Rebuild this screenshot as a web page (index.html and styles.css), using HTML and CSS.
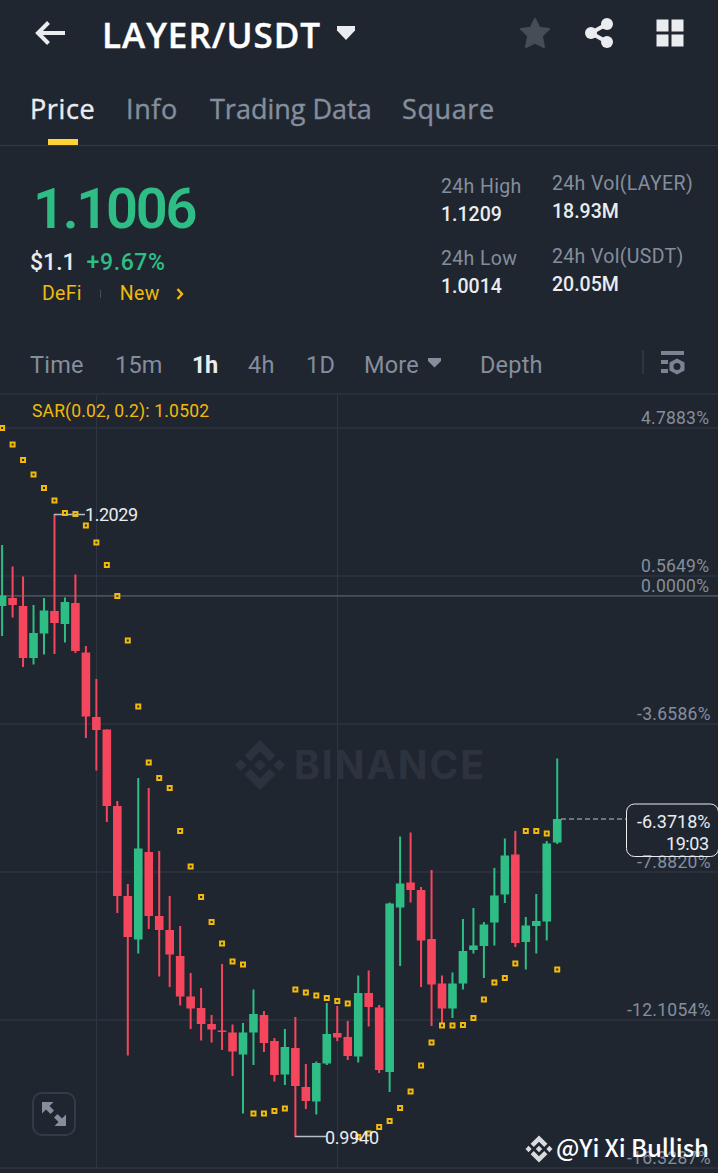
FILE: index.html
```html
<!DOCTYPE html>
<html lang="en">
<head>
  <meta charset="UTF-8">
  <title>LAYER/USDT</title>
  <link rel="stylesheet" href="styles.css">
</head>
<body>

  <!-- Top bar -->
  <header class="topbar">
    <svg class="back" width="32" height="26" viewBox="0 0 32 26">
      <path d="M31 13H4M14.500 2.500L4 13l10.500 10.500" fill="none" stroke="#eaecef" stroke-width="4"/>
    </svg>
    <h1 class="pair">LAYER/USDT</h1>
    <svg class="pair-caret" width="18" height="14" viewBox="0 0 18 14">
      <path d="M0 0h18v4.500L9 14 0 4.500z" fill="#eaecef"/>
    </svg>
    <div class="actions">
      <svg width="30" height="30" viewBox="0 0 30 30">
        <path d="M15 1l4.200 8.800 9.800 1.200-7.200 6.900 2.200 11.100-9-4.500-9 4.500 2.200-11.100L1 11l9.800-1.200z" fill="#474d57" stroke="#474d57" stroke-width="2" stroke-linejoin="round"/>
      </svg>
      <svg width="30" height="30" viewBox="0 0 30 30">
        <path d="M22 6L6 15l16 9" fill="none" stroke="#eaecef" stroke-width="4"/>
        <circle cx="6" cy="15" r="6" fill="#eaecef"/>
        <circle cx="22" cy="6" r="6" fill="#eaecef"/>
        <circle cx="22" cy="24" r="6" fill="#eaecef"/>
      </svg>
      <svg width="28" height="28" viewBox="0 0 28 28" fill="#eaecef">
        <rect x="0.500" y="0.500" width="12" height="12"/>
        <rect x="15.500" y="0.500" width="12" height="12"/>
        <rect x="0.500" y="15.500" width="12" height="12"/>
        <rect x="15.500" y="15.500" width="12" height="12"/>
      </svg>
    </div>
  </header>

  <!-- Tabs -->
  <nav class="tabs">
    <a class="tab active">Price</a>
    <a class="tab">Info</a>
    <a class="tab long">Trading Data</a>
    <a class="tab">Square</a>
  </nav>

  <!-- Price and 24h figures -->
  <section class="ticker">
    <div class="quote">
      <div class="price">1.1006</div>
      <div class="fiat"><span>$1.1</span><span class="change">+9.67%</span></div>
      <div class="tags">
        <span>DeFi</span>
        <i class="tag-line"></i>
        <span class="tag-new">New</span>
        <svg width="8" height="12" viewBox="0 0 8 12">
          <path d="M1.500 1L6 6l-4.500 5" fill="none" stroke="#f0b90b" stroke-width="2.400"/>
        </svg>
      </div>
    </div>
    <div class="stats">
      <div class="stat"><label>24h High</label><b>1.1209</b></div>
      <div class="stat"><label>24h Low</label><b>1.0014</b></div>
    </div>
    <div class="stats vol">
      <div class="stat"><label>24h Vol(LAYER)</label><b>18.93M</b></div>
      <div class="stat"><label>24h Vol(USDT)</label><b>20.05M</b></div>
    </div>
  </section>

  <!-- Chart intervals -->
  <nav class="intervals">
    <a>Time</a>
    <a>15m</a>
    <a class="active">1h</a>
    <a>4h</a>
    <a>1D</a>
    <a class="more">More
      <svg width="13" height="10" viewBox="0 0 13 10"><path d="M0 0h13v3L6.500 9.500 0 3z" fill="#848e9c"/></svg>
    </a>
    <a>Depth</a>
    <div class="settings">
      <svg width="26" height="26" viewBox="0 0 26 26" fill="#7c8494">
        <rect x="1" y="1" width="23" height="4"/>
        <rect x="1" y="10" width="7" height="4"/>
        <rect x="1" y="19" width="7" height="4"/>
        <path fill-rule="evenodd" d="M17 8.500l7.500 4v8L17 24.500l-7.500-4v-8zM17 13a3.500 3.500 0 1 0 0 7 3.500 3.500 0 0 0 0-7z"/>
      </svg>
    </div>
  </nav>

  <!-- Candlestick chart -->
  <main class="chart">
    <svg id="plot" width="718" height="780" viewBox="0 393 718 780">
      <g id="grid"></g>
      <g class="logo">
        <g transform="translate(260 765)">
          <path d="M0-25L15.500-9.500 9.700-3.800 0-13.500-9.700-3.800-15.500-9.500zM0 25L15.500 9.500 9.700 3.800 0 13.500-9.700 3.800-15.500 9.500zM0-5.700L5.700 0 0 5.700-5.700 0zM-19.300-5.700L-13.600 0l-5.700 5.700L-25 0zM19.300-5.700L25 0l-5.700 5.700L13.600 0z"/>
        </g>
        <text x="294" y="779" textLength="190">BINANCE</text>
      </g>
      <g id="candles"></g>
      <path class="pointer" d="M54 514.500H85M295 1136.500H326"/>
      <g id="sar"></g>
      <path class="last-line" d="M561 819H626"/>
      <text class="sar-label" x="32" y="417" textLength="177">SAR(0.02, 0.2): 1.0502</text>
      <text class="extreme" x="85" y="521" textLength="53">1.2029</text>
      <text class="extreme" x="325" y="1144" textLength="54">0.9940</text>
      <g class="axis">
        <text x="641" y="424" textLength="68">4.7883%</text>
        <text x="641" y="572" textLength="68">0.5649%</text>
        <text x="641" y="592" textLength="68">0.0000%</text>
        <text x="637" y="720" textLength="73.500">-3.6586%</text>
        <text x="637" y="868" textLength="73.500">-7.8820%</text>
        <text x="627" y="1016" textLength="83.500">-12.1054%</text>
        <text x="627" y="1164" textLength="83.500">-16.3287%</text>
      </g>
      <rect class="tag-box" x="626.500" y="804" width="92" height="52.500" rx="8"/>
      <g class="tag-text">
        <text x="637" y="828" textLength="73.500">-6.3718%</text>
        <text x="666" y="850" textLength="43">19:03</text>
      </g>
      <g class="expand">
        <rect x="33" y="1093" width="42" height="42" rx="9"/>
        <path d="M42 1102h11.500l-4 4 4.500 4.500-3.500 3.500-4.500-4.500-4 4zM66 1126H54.500l4-4-4.500-4.500 3.500-3.500 4.500 4.500 4-4z"/>
      </g>
      <g class="author">
        <g transform="translate(539 1149) scale(.54)">
          <path d="M0-25L15.500-9.500 9.700-3.800 0-13.500-9.700-3.800-15.500-9.500zM0 25L15.500 9.500 9.700 3.800 0 13.500-9.700 3.800-15.500 9.500zM0-6L6 0 0 6-6 0zM-19.300-6L-13.600 0l-5.700 6L-25 0zM19.300-6L25 0l-5.700 6L13.600 0z"/>
        </g>
        <text x="556" y="1157" textLength="153">@Yi Xi Bullish</text>
      </g>
    </svg>
  </main>

  <script src="chart.js"></script>
</body>
</html>
```
FILE: styles.css
```css
* {
  box-sizing: border-box;
}

body {
  margin: 0;
  width: 718px;
  height: 1173px;
  overflow: hidden;
  background: #202630;
  color: #eaecef;
  font-family: Roboto, sans-serif;
}

svg {
  display: block;
  flex: none;
}

/* top bar */
.topbar {
  display: flex;
  align-items: center;
  height: 66px;
  padding: 0 34px;
}

.pair {
  margin: 2px 0 0 36px;
  width: 219px;
  font: 600 35px "Open Sans", sans-serif;
  letter-spacing: 1px;
  color: #fff;
  white-space: nowrap;
  -webkit-text-stroke: 0.4px #fff;
}

.pair-caret {
  margin-left: 16px;
}

.actions {
  display: flex;
  align-items: center;
  margin-left: auto;
}

.actions svg + svg {
  margin-left: 35px;
}

.actions svg:last-child {
  margin-left: 41px;
}

/* tabs */
.tabs {
  display: grid;
  grid-template-columns: 96px 84px 192px 100px;
  height: 80px;
  padding: 0 30px;
  border-bottom: 1px solid #343b45;
}

.tab {
  position: relative;
  padding-top: 24px;
  font: 500 27px/38px "Open Sans", sans-serif;
  letter-spacing: 0.6px;
  color: #848e9c;
  white-space: nowrap;
  -webkit-text-stroke: 0.4px currentColor;
}

.tab.long {
  letter-spacing: 0;
}

.tab.active {
  color: #eaecef;
}

.tab.active::after {
  content: "";
  position: absolute;
  left: 18px;
  bottom: 0;
  width: 30px;
  height: 6px;
  background: #fcd535;
}

/* ticker */
.ticker {
  display: grid;
  grid-template-columns: 411px 111px 1fr;
  height: 190px;
  padding-left: 30px;
}

.price {
  margin: 27px 0 0 3px;
  font-size: 56px;
  line-height: 72px;
  font-weight: 600;
  letter-spacing: -2.3px;
  color: #2ebd85;
}

.fiat {
  display: flex;
  gap: 11px;
  margin-top: 3px;
  font-size: 23px;
  line-height: 30px;
  font-weight: 500;
}

.change {
  letter-spacing: 0.6px;
  color: #2ebd85;
}

.tags {
  display: flex;
  align-items: center;
  margin: 4px 0 0 12px;
  font-size: 19.5px;
  line-height: 24px;
  letter-spacing: 0.3px;
  color: #f0b90b;
}

.tag-line {
  width: 1px;
  height: 8px;
  margin: 0 19px 0 18px;
  background: #474d57;
}

.tag-new {
  margin-right: 16px;
}

.stats {
  padding-top: 27px;
}

.stats.vol {
  padding-top: 24px;
}

.stat {
  display: flex;
  flex-direction: column;
  height: 72px;
  font-size: 19.5px;
  line-height: 28px;
  white-space: nowrap;
}

.stats.vol .stat {
  height: 73px;
}

.stat label {
  letter-spacing: 0.35px;
  color: #848e9c;
}

.stat b {
  font-weight: 500;
}

/* intervals */
.intervals {
  display: grid;
  grid-template-columns: 85px 77px 56px 58px 58px 116px 162px 46px;
  height: 57px;
  padding: 14px 0 0 30px;
  font-size: 23.5px;
  line-height: 30px;
  letter-spacing: 0.2px;
  color: #848e9c;
}

.intervals .active {
  color: #eaecef;
  font-weight: 700;
  letter-spacing: -0.5px;
}

.more {
  display: flex;
  height: 30px;
  gap: 9px;
}

.more svg {
  margin-top: 8px;
}

.settings {
  height: 24px;
  padding-left: 16px;
  border-left: 2px solid #303641;
}

/* chart */
.grid-line {
  fill: #2a303b;
}

.grid-line.vertical {
  fill: #303641;
}

.grid-line.zero {
  fill: #5b626d;
}

.up {
  fill: #2ebd85;
}

.down {
  fill: #f6465d;
}

.dot {
  fill: none;
  stroke: #f0b90b;
  stroke-width: 2;
}

.pointer {
  stroke: #b7bdc6;
  stroke-width: 1.5;
}

.last-line {
  stroke: #848e9c;
  stroke-width: 1.5;
  stroke-dasharray: 5 3;
}

.logo {
  fill: #2d333e;
}

.logo text {
  font: 700 39px Inter, sans-serif;
}

.sar-label {
  font-size: 17.5px;
  fill: #f0b90b;
}

.extreme {
  font-size: 18px;
  fill: #eaecef;
}

.axis {
  font-size: 17.5px;
  fill: #848e9c;
}

.tag-box {
  fill: none;
  stroke: #eaecef;
}

.tag-text {
  font-size: 18px;
  fill: #eaecef;
}

.expand rect {
  fill: none;
  stroke: #343b47;
  stroke-width: 2;
}

.expand path {
  fill: #848e9c;
}

.author text {
  font: 500 24px "Noto Sans CJK SC", sans-serif;
  fill: #fff;
}

.author path {
  fill: #d9dbde;
}
```
FILE: chart.js
```js
const STEP = 10.474;

// [direction, high, body top, body bottom, low, sar]
const candles = [
  ['up', 545, 595.5, 606, 636, 428],
  ['down', 566.5, 598, 605, 617.5, 444.5],
  ['down', 576.5, 606, 658, 667, 460],
  ['up', 605, 633, 658, 664.5, 474.5],
  ['up', 598, 610.5, 633.5, 654.5, 488],
  ['down', 514, 611, 623, 654, 500.5],
  ['up', 597.5, 602, 624, 642.5, 513],
  ['down', 574.5, 603, 651, 653, 514],
  ['down', 646, 652.5, 716.5, 738, 525.5],
  ['down', 679, 717, 730, 770.5, 542.5],
  ['down', 729.5, 729.5, 806, 822, 565],
  ['down', 801, 806, 896, 913, 596],
  ['down', 884, 896, 937, 1055.5, 640.5],
  ['up', 778, 848.5, 939.5, 953.5, 706.5],
  ['down', 788, 852, 916, 929, 762.5],
  ['down', 851, 916, 930, 976.5, 778],
  ['down', 896, 930, 954.5, 987, 788],
  ['down', 926, 956, 996.5, 1005.5, 831],
  ['down', 973, 996.5, 1008.5, 1029, 866.5],
  ['down', 988, 1008, 1024, 1040.5, 897],
  ['down', 1015, 1024, 1029.5, 1042.5, 922],
  ['down', 964, 1030.5, 1032, 1050, 943.5],
  ['down', 1024.5, 1032.5, 1051.5, 1076, 961.5],
  ['up', 1023, 1032.5, 1054.5, 1113.5, 964.5],
  ['up', 989.5, 1014, 1032.5, 1065, 1113.5],
  ['down', 1011, 1015, 1043, 1052, 1113.5],
  ['down', 1038, 1041, 1075, 1081.5, 1111],
  ['up', 1029, 1047, 1074.5, 1085, 1108.5],
  ['down', 1017, 1048, 1086, 1137, 989.5],
  ['down', 1064, 1087, 1101, 1109, 992.5],
  ['up', 1061.5, 1063, 1101.5, 1114.5, 995.5],
  ['up', 1003, 1034, 1063.5, 1065, 998],
  ['down', 1006, 1033, 1037.5, 1041, 1001],
  ['down', 1021, 1037, 1056, 1060, 1003.5],
  ['up', 975.5, 993, 1056.5, 1062.5, 1137],
  ['down', 970.5, 993, 1007, 1026.5, 1133.5],
  ['down', 1005, 1007.5, 1070, 1073, 1127],
  ['up', 902.5, 903.5, 1072, 1092, 1121],
  ['up', 836.5, 883.5, 907.5, 966, 1108],
  ['down', 832.5, 882.5, 890, 902.5, 1091.5],
  ['down', 887, 890, 940.5, 987, 1065.5],
  ['down', 870, 939, 984.5, 1026, 1042.5],
  ['down', 975.5, 983.5, 1008.5, 1024, 1025.5],
  ['up', 972.5, 983.5, 1008.5, 1018, 1025.5],
  ['up', 919, 951, 983.5, 989.5, 1025],
  ['up', 908, 945.5, 950, 953.5, 1018],
  ['up', 922, 924.5, 946, 978, 999.5],
  ['up', 868, 895.5, 922.5, 945.5, 982.5],
  ['up', 838.5, 855.5, 894.5, 903, 978],
  ['down', 831, 854.5, 943, 947, 963.5],
  ['up', 917, 925.5, 942, 969.5, 831],
  ['up', 894, 921, 926, 953.5, 831],
  ['up', 841, 843.5, 921.5, 940.5, 833.5],
  ['up', 758.5, 819, 842.5, 844, 969.5]
];

// Add a rect to one of the chart layers
function addRect(layer, className, x, y, width, height) {
  const rect = document.createElementNS('http://www.w3.org/2000/svg', 'rect');
  rect.setAttribute('class', className);
  rect.setAttribute('x', x);
  rect.setAttribute('y', y);
  rect.setAttribute('width', width);
  rect.setAttribute('height', height);
  document.getElementById(layer).appendChild(rect);
}

// Grid
[393, 427, 575, 723, 871, 1019, 1167].forEach(y => {
  addRect('grid', 'grid-line', 0, y, 718, 2);
});
[96, 337].forEach(x => addRect('grid', 'grid-line vertical', x, 395, 1, 773));
addRect('grid', 'grid-line zero', 0, 595.3, 718, 1.2);

// Candles and SAR dots
candles.forEach(([direction, high, top, bottom, low, sar], i) => {
  const x = 2.1 + i * STEP;
  addRect('candles', direction, x - 1, high, 2, low - high);
  addRect('candles', direction, x - 4.3, top, 8.6, bottom - top);
  addRect('sar', 'dot', x - 2, sar - 2, 4, 4);
});
```
